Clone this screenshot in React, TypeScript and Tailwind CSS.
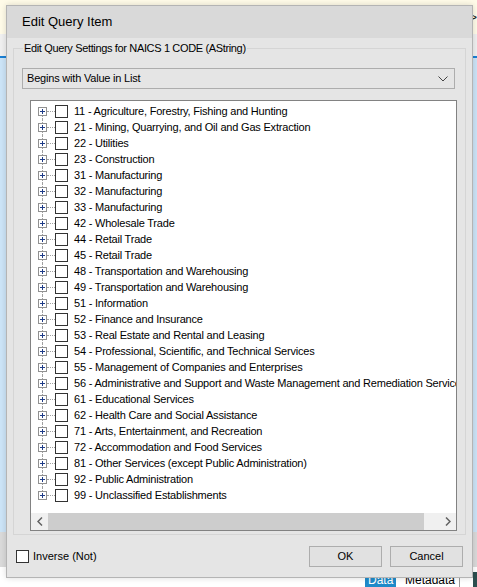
import React from 'react';

const items = [
  '11 - Agriculture, Forestry, Fishing and Hunting',
  '21 - Mining, Quarrying, and Oil and Gas Extraction',
  '22 - Utilities',
  '23 - Construction',
  '31 - Manufacturing',
  '32 - Manufacturing',
  '33 - Manufacturing',
  '42 - Wholesale Trade',
  '44 - Retail Trade',
  '45 - Retail Trade',
  '48 - Transportation and Warehousing',
  '49 - Transportation and Warehousing',
  '51 - Information',
  '52 - Finance and Insurance',
  '53 - Real Estate and Rental and Leasing',
  '54 - Professional, Scientific, and Technical Services',
  '55 - Management of Companies and Enterprises',
  '56 - Administrative and Support and Waste Management and Remediation Services',
  '61 - Educational Services',
  '62 - Health Care and Social Assistance',
  '71 - Arts, Entertainment, and Recreation',
  '72 - Accommodation and Food Services',
  '81 - Other Services (except Public Administration)',
  '92 - Public Administration',
  '99 - Unclassified Establishments',
];

function TreeRow({ label, first, last }: { label: string; first: boolean; last: boolean }) {
  return (
    <div className="relative flex h-[16px] items-center whitespace-nowrap">
      {/* vertical dotted connector */}
      <div
        className={`absolute left-[11px] w-0 border-l border-dotted border-[#a0a0a0] ${first ? 'top-[8px]' : 'top-0'} ${last ? 'h-[8px]' : 'bottom-0'}`}
      />
      <div className="relative ml-[7px] flex h-[9px] w-[9px] shrink-0 items-center justify-center border border-[#919191] bg-white">
        <svg width="7" height="7" viewBox="0 0 7 7">
          <path d="M1 3.5h5M3.5 1v5" stroke="#1f3c88" strokeWidth="1" shapeRendering="crispEdges" />
        </svg>
      </div>
      <div className="w-[8px] shrink-0 border-t border-dotted border-[#a0a0a0]" />
      <div className="h-[13px] w-[13px] shrink-0 border border-[#333333] bg-white" />
      <span className="ml-[6px] shrink-0 text-[11px] tracking-[-0.2px] text-black">{label}</span>
    </div>
  );
}

export default function App() {
  return (
    <div className="relative h-[587px] w-[477px] overflow-hidden bg-white" style={{ fontFamily: '"Liberation Sans", Arial, sans-serif' }}>
      {/* background application */}
      <div className="absolute inset-x-0 top-0 h-[34px] bg-[#fffbe8]" />
      <div className="absolute inset-x-0 top-[34px] h-[22px] bg-[#f0f0f0]" />
      <div className="absolute inset-x-0 top-[56px] h-[2px] bg-[#1a7fd4]" />
      <div className="absolute inset-x-0 top-[58px] h-[474px] bg-[#cce4f7]" />
      <div className="absolute inset-x-0 top-[532px] h-[35px] bg-[#dadada]" />
      <div className="absolute right-0 top-[12px] text-[11px] leading-none text-black">&gt;</div>
      <div className="absolute left-[365px] top-[574px] bg-[#1f8ac9] px-[3px] text-[12px] leading-[13px] text-white">Data</div>
      <div className="absolute left-[405px] top-[574px] text-[12px] leading-[13px] text-black">Metadata</div>
      <div className="absolute left-[459px] top-[572px] h-[15px] w-px bg-[#999]" />
      <div className="absolute right-0 top-[572px] h-[15px] w-[4px] bg-[#2c4f4f]" />

      {/* dialog window */}
      <div className="absolute left-[6px] top-[5px] flex h-[573px] w-[467px] flex-col border border-[#b4b4b4] bg-[#e5e5e5] shadow-[0_0_6px_rgba(0,0,0,0.15)]">
        <div className="flex h-[32px] shrink-0 items-center bg-[#d9d9d9] pl-[15px] text-[13px] text-black">Edit Query Item</div>

        <div className="relative mx-[6px] mt-[10px] h-[487px] border border-[#d5d5d5]">
          <div className="absolute left-[9px] top-[-8px] bg-[#e5e5e5] px-px text-[11px] leading-[14px] tracking-[-0.35px] text-black">
            Edit Query Settings for NAICS 1 CODE (AString)
          </div>

          <div className="ml-[8px] mr-[10px] mt-[19px] flex h-[21px] items-center justify-between border border-[#adadad] bg-[#e5e5e5] pl-[4px] pr-[6px] text-[11px] tracking-[-0.2px] text-black">
            <span>Begins with Value in List</span>
            <svg width="10" height="6" viewBox="0 0 10 6">
              <path d="M0.5 0.5L5 5L9.5 0.5" fill="none" stroke="#444" strokeWidth="1" />
            </svg>
          </div>

          <div className="ml-[16px] mr-[8px] mt-[11px] flex h-[431px] flex-col overflow-hidden border border-[#828282] bg-white">
            <div className="flex-1 overflow-hidden pt-[2px]">
              {items.map((it, i) => (
                <TreeRow key={it} label={it} first={i === 0} last={i === items.length - 1} />
              ))}
            </div>
            <div className="flex h-[17px] shrink-0 items-center bg-[#f0f0f0]">
              <div className="flex w-[17px] items-center justify-center">
                <svg width="6" height="9" viewBox="0 0 6 9">
                  <path d="M5 0.5L1 4.5L5 8.5" fill="none" stroke="#606060" strokeWidth="1.5" />
                </svg>
              </div>
              <div className="h-[17px] flex-1 bg-[#cdcdcd]" />
              <div className="w-[15px]" />
              <div className="flex w-[17px] items-center justify-center">
                <svg width="6" height="9" viewBox="0 0 6 9">
                  <path d="M1 0.5L5 4.5L1 8.5" fill="none" stroke="#606060" strokeWidth="1.5" />
                </svg>
              </div>
            </div>
          </div>
        </div>

        <div className="mx-[9px] mt-[11px] flex items-center justify-between">
          <div className="flex items-center">
            <div className="h-[13px] w-[13px] border border-[#333333] bg-white" />
            <span className="ml-[4px] text-[11px] text-black">Inverse (Not)</span>
          </div>
          <div className="flex gap-[8px]">
            <button className="h-[21px] w-[73px] border border-[#adadad] bg-[#e1e1e1] text-[11px] text-black">OK</button>
            <button className="h-[21px] w-[73px] border border-[#adadad] bg-[#e1e1e1] text-[11px] text-black">Cancel</button>
          </div>
        </div>
      </div>
    </div>
  );
}
